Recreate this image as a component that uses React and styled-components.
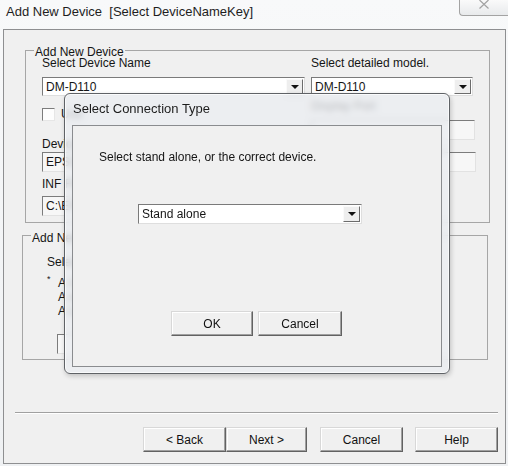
import React from "react";
import styled, { createGlobalStyle } from "styled-components";

const GlobalStyle = createGlobalStyle`
  html, body {
    margin: 0;
    padding: 0;
    background: #f4f5f6;
  }
  body {
    font-family: "Liberation Sans", Arial, sans-serif;
    font-size: 12px;
    color: #151515;
  }
  * {
    box-sizing: border-box;
  }
`;

const Window = styled.div`
  width: 508px;
  height: 466px;
  overflow: hidden;
  display: flex;
  flex-direction: column;
  background: linear-gradient(#f8f9fa, #eff1f3);
`;

const TitleBar = styled.div`
  height: 29px;
  flex: none;
  display: flex;
  justify-content: space-between;
  align-items: flex-start;
`;

const Title = styled.div`
  font-size: 13px;
  line-height: 16px;
  padding: 4px 0 0 6px;
  color: #1e1e1e;
  white-space: pre;
`;

const CloseButton = styled.div`
  width: 49px;
  height: 17px;
  margin-top: -1px;
  display: flex;
  align-items: flex-start;
  justify-content: center;
  padding-top: 1px;
  border: 1px solid #a3a3a3;
  border-top: none;
  border-right: none;
  border-radius: 0 0 0 4px;
  background: linear-gradient(#fbfbfb, #e8eaec);
`;

const Body = styled.div`
  position: relative;
  margin-left: 3px;
  width: 503px;
  height: 435px;
  border: 1px solid #8e8f91;
  background: #f0f0f0;
`;

const GroupBox = styled.div`
  margin: ${(p) => p.$top}px 0 0 ${(p) => p.$left}px;
  width: ${(p) => p.$width}px;
  height: ${(p) => p.$height}px;
  border: 1px solid #a6a6a6;
`;

const Legend = styled.div`
  width: max-content;
  margin: ${(p) => p.$offset}px 0 0 8px;
  padding: 0 1px;
  line-height: 11px;
  background: #f0f0f0;
`;

const GroupContent = styled.div`
  padding-left: ${(p) => p.$indent}px;
`;

const FieldGrid = styled.div`
  display: grid;
  grid-template-columns: 263px 164px;
  column-gap: 6px;
`;

const Column = styled.div`
  display: flex;
  flex-direction: column;
  align-items: flex-start;
`;

const Label = styled.div`
  line-height: ${(p) => p.$line || 14}px;
  white-space: nowrap;
  margin-top: ${(p) => p.$gap || 0}px;
`;

const ComboBox = styled.div`
  width: ${(p) => p.$width}px;
  height: ${(p) => p.$height || 19}px;
  margin: ${(p) => p.$gap || 0}px 0 0 ${(p) => p.$left || 0}px;
  display: flex;
  align-items: center;
  justify-content: space-between;
  padding: 0 1px 0 3px;
  background: #fff;
  border: 1px solid;
  border-color: #7a7a7a #dedede #dedede #7a7a7a;
  white-space: nowrap;
`;

const DropButton = styled.div`
  width: 17px;
  height: calc(100% - 2px);
  display: flex;
  align-items: center;
  justify-content: center;
  background: #eeeeee;
  border: 1px solid;
  border-color: #fafafa #6c6c6c #6c6c6c #fafafa;
`;

const Arrow = styled.span`
  width: 0;
  height: 0;
  border-left: 4px solid transparent;
  border-right: 4px solid transparent;
  border-top: 4px solid #111;
`;

const TextBox = styled.div`
  width: ${(p) => p.$width}px;
  height: 20px;
  margin-top: ${(p) => p.$gap || 0}px;
  margin-left: ${(p) => p.$left || 0}px;
  padding-left: 3px;
  line-height: 18px;
  white-space: nowrap;
  overflow: hidden;
  background: #f7f7f7;
  border: 1px solid;
  border-color: #7c7c7c #e2e2e2 #e2e2e2 #7c7c7c;
`;

const CheckRow = styled.div`
  display: flex;
  align-items: center;
  gap: 6px;
  margin-top: 11px;
  white-space: nowrap;
`;

const CheckBox = styled.span`
  width: 13px;
  height: 13px;
  background: #fdfdfd;
  border: 1px solid;
  border-color: #7c7c7c #e6e6e6 #e6e6e6 #7c7c7c;
`;

const NoteList = styled.div`
  display: flex;
  margin-top: 7px;
`;

const Asterisk = styled.span`
  width: 11px;
  font-size: 9px;
  line-height: 9px;
  margin-top: -1px;
`;

const NoteLines = styled.div`
  display: flex;
  flex-direction: column;
  line-height: 14px;
  white-space: nowrap;
`;

const Separator = styled.div`
  margin: 52px 0 0 11px;
  width: 483px;
  height: 2px;
  border-top: 1px solid #a0a0a0;
  border-bottom: 1px solid #ffffff;
`;

const ButtonRow = styled.div`
  display: flex;
  margin-top: ${(p) => p.$gap}px;
  padding-left: ${(p) => p.$indent}px;
`;

const Button = styled.button`
  width: ${(p) => p.$width}px;
  height: 25px;
  margin-left: ${(p) => p.$gap || 0}px;
  padding: 0;
  font-family: inherit;
  font-size: 12px;
  color: #111;
  background: #f0f0f0;
  border: 1px solid;
  border-color: #d8d8d8 #626262 #626262 #d8d8d8;
  box-shadow: inset -1px -1px 0 #a0a0a0, inset 1px 1px 0 #ffffff;
`;

/* connection-type popup with a translucent, frosted frame */
const Modal = styled.div`
  position: absolute;
  left: 60px;
  top: 63px;
  width: 386px;
  height: 281px;
  display: flex;
  flex-direction: column;
  padding: 0 7px 6px 7px;
  border: 1px solid #5f6266;
  border-radius: 6px;
  background: rgba(234, 237, 241, 0.76);
  backdrop-filter: blur(3px);
  box-shadow: inset 0 0 0 1px rgba(255, 255, 255, 0.7),
    1px 2px 5px rgba(0, 0, 0, 0.2);
`;

const ModalTitle = styled.div`
  height: 31px;
  flex: none;
  padding: 7px 0 0 1px;
  font-size: 13px;
  line-height: 16px;
  color: #1c1c1c;
`;

const Panel = styled.div`
  flex: 1;
  background: #f0f0f0;
  border: 1px solid #8a8c8f;
`;

const Message = styled.div`
  margin: 24px 0 0 26px;
  line-height: 14px;
`;

function Combo({ width, height, gap, left, children }) {
  return (
    <ComboBox $width={width} $height={height} $gap={gap} $left={left}>
      <span>{children}</span>
      <DropButton>
        <Arrow />
      </DropButton>
    </ComboBox>
  );
}

function CloseGlyph() {
  return (
    <svg width="12" height="10" viewBox="0 0 12 10">
      <path
        d="M1.5 0 L10.5 8.5 M10.5 0 L1.5 8.5"
        stroke="#a2a2a2"
        strokeWidth="1.2"
        fill="none"
      />
    </svg>
  );
}

export default function App() {
  return (
    <>
      <GlobalStyle />
      <Window>
        <TitleBar>
          <Title>Add New Device  [Select DeviceNameKey]</Title>
          <CloseButton>
            <CloseGlyph />
          </CloseButton>
        </TitleBar>

        <Body>
          <GroupBox $top={20} $left={21} $width={465} $height={173}>
            <Legend $offset={-4}>Add New Device</Legend>
            <GroupContent $indent={16}>
              <FieldGrid>
                <Column>
                  <Label $line={11}>Select Device Name</Label>
                  <Combo width={263} gap={8}>
                    DM-D110
                  </Combo>
                  <CheckRow>
                    <CheckBox />
                    <span>Use</span>
                  </CheckRow>
                  <Label $gap={16}>Device</Label>
                </Column>
                <Column>
                  <Label $line={11}>Select detailed model.</Label>
                  <Combo width={162} gap={8}>
                    DM-D110
                  </Combo>
                  <Label $gap={3}>Display Port</Label>
                  <TextBox $width={164} $gap={7} />
                </Column>
              </FieldGrid>
              <TextBox $width={434} $gap={1}>
                EPSON
              </TextBox>
              <Label $gap={5}>INF File</Label>
              <TextBox $width={380} $gap={5}>
                C:\EPSON
              </TextBox>
            </GroupContent>
          </GroupBox>

          <GroupBox $top={12} $left={18} $width={466} $height={125}>
            <Legend $offset={-3}>Add New Port</Legend>
            <GroupContent $indent={24}>
              <Label $gap={11}>Select port</Label>
              <NoteList>
                <Asterisk>*</Asterisk>
                <NoteLines>
                  <span>A USB port</span>
                  <span>A serial port</span>
                  <span>A LAN port</span>
                </NoteLines>
              </NoteList>
              <TextBox $width={300} $gap={16} $left={10} />
            </GroupContent>
          </GroupBox>

          <Separator />

          <ButtonRow $gap={13} $indent={139}>
            <Button $width={83}>&lt; Back</Button>
            <Button $width={81}>Next &gt;</Button>
            <Button $width={83} $gap={13}>
              Cancel
            </Button>
            <Button $width={83} $gap={12}>
              Help
            </Button>
          </ButtonRow>

          <Modal>
            <ModalTitle>Select Connection Type</ModalTitle>
            <Panel>
              <Message>Select stand alone, or the correct device.</Message>
              <Combo width={224} height={20} gap={40} left={65}>
                Stand alone
              </Combo>
              <ButtonRow $gap={87} $indent={98}>
                <Button $width={82}>OK</Button>
                <Button $width={84} $gap={5}>
                  Cancel
                </Button>
              </ButtonRow>
            </Panel>
          </Modal>
        </Body>
      </Window>
    </>
  );
}
